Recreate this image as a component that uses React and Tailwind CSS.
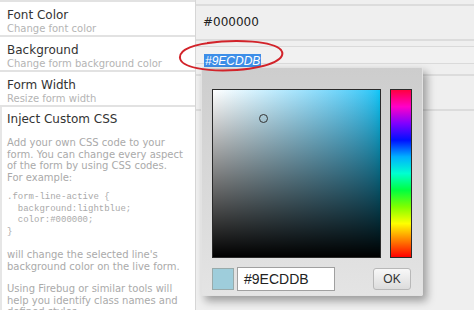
import React from 'react';

const rows = [
  { title: 'Font Color', sub: 'Change font color' },
  { title: 'Background', sub: 'Change form background color' },
  { title: 'Form Width', sub: 'Resize form width' },
];

const ColorPicker = () => (
  <div className="absolute left-[201px] top-[67px] w-[222px] h-[229px] bg-linear-to-b from-[#cdcdcd] to-[#e4e4e4] border border-[#e2e2e2] rounded-[2px] shadow-[4px_5px_8px_rgba(0,0,0,0.35)] px-[10px] pt-[21px]">
    <div className="flex gap-[8px]">
      <div className="w-[171px] h-[169px] border border-[#2a2a2a] bg-linear-to-r from-white to-[#08c6f8] relative">
        <div className="absolute inset-0 bg-linear-to-t from-black to-transparent" />
        <div className="absolute left-[46px] top-[24px] w-[9px] h-[9px] rounded-full border border-[#333]" />
      </div>
      <div className="ml-[1px] w-[22px] h-[169px] border border-[#2a2a2a] bg-[linear-gradient(to_bottom,#ff0040,#ff00c8,#8000ff,#0010ff,#00b0ff,#00ffd0,#00ff40,#80ff00,#ffff00,#ff8000,#ff0000)]" />
    </div>
    <div className="flex items-center mt-[9px] font-['Liberation_Sans',sans-serif]">
      <div className="w-[22px] h-[22px] bg-[#9ecddb] border border-[#9aa]" />
      <div className="ml-[3px] w-[98px] h-[24px] bg-white border border-[#a0a0a0] pl-[6px] text-[14px] leading-[22px] text-[#222]">
        #9ECDDB
      </div>
      <div className="ml-auto mr-[1px] w-[38px] h-[22px] rounded-[3px] border border-[#b8b8b8] bg-linear-to-b from-[#f8f8f8] to-[#dcdcdc] text-[12px] leading-[20px] text-center text-[#333]">
        OK
      </div>
    </div>
  </div>
);

export default function App() {
  return (
    <div className="relative w-[474px] h-[310px] overflow-hidden bg-[#efefef] font-['DejaVu_Sans',sans-serif]">
      <div className="flex h-full">
        <div className="w-[196px] shrink-0 bg-white border-r border-[#d6d6d6] flex flex-col">
          <div className="h-[6px] border-b-2 border-[#e2e2e2]" />
          {rows.map((r) => (
            <div key={r.title} className="h-[35px] border-b-2 border-[#e2e2e2] px-[7px] pt-[5px]">
              <div className="text-[12px] leading-[16px] text-[#333]">{r.title}</div>
              <div className="text-[10px] leading-[12px] text-[#b4b4b4]">{r.sub}</div>
            </div>
          ))}
          <div className="flex-1 border-l-2 border-[#e6e6e6] pl-[5px] pt-[4px] text-[10px] leading-[11.5px] text-[#aaa]">
            <div className="text-[12px] leading-[16px] text-[#333]">Inject Custom CSS</div>
            <p className="mt-[10px]">
              Add your own CSS code to your<br />
              form. You can change every aspect<br />
              of the form by using CSS codes.<br />
              For example:
            </p>
            <pre className="mt-[9px] font-['Liberation_Mono',monospace] text-[9px] leading-[11.5px] text-[#aaa]">
{`.form-line-active {
  background:lightblue;
  color:#000000;
}`}
            </pre>
            <p className="mt-[11px]">
              will change the selected line's<br />
              background color on the live form.
            </p>
            <p className="mt-[11px]">
              Using Firebug or similar tools will<br />
              help you identify class names and<br />
              defined styles.
            </p>
          </div>
        </div>
        <div className="flex-1 flex flex-col">
          <div className="h-[6px] border-b-2 border-[#dcdcdc]" />
          <div className="h-[35px] border-b-2 border-[#dcdcdc] px-[7px] pt-[8px] text-[12px] leading-[16px] text-[#222]">
            #000000
          </div>
          <div className="h-[35px] border-b-2 border-[#dcdcdc] pt-[5px]">
            <div className="h-[18px] border-y border-[#dadada] bg-[#f1f1f1] pl-[8px] pt-[1px]">
              <span className="font-['Liberation_Sans',sans-serif] italic text-[12px] leading-[15px] text-white bg-[#3d8ee8] px-[1px]">
                #9ECDDB
              </span>
            </div>
          </div>
          <div className="h-[35px] border-b-2 border-[#dcdcdc]" />
        </div>
      </div>
      <ColorPicker />
      <svg className="absolute left-[177px] top-[39px]" width="112" height="34" viewBox="0 0 112 34">
        <path
          d="M30 4 C60 0 96 2 104 11 C110 19 96 28 60 31 C28 33 4 28 3 19 C2 10 18 5 40 3"
          fill="none"
          stroke="#d2232a"
          strokeWidth="2"
        />
      </svg>
    </div>
  );
}
